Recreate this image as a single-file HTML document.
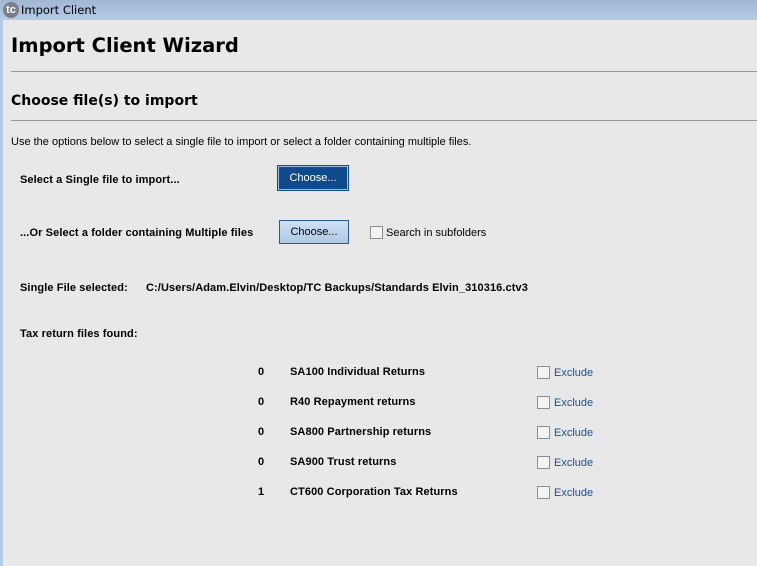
<!DOCTYPE html>
<html><head><style>
body{margin:0;width:757px;height:566px;overflow:hidden;background:#e8e8e8;font-family:"Liberation Sans",Arial,sans-serif;position:relative}
.a{position:absolute;white-space:nowrap}
.b{font-weight:bold;font-size:11px;color:#000;letter-spacing:0.1px}
.t{font-size:11px;color:#000}
.cb{position:absolute;width:11px;height:11px;border:1px solid #8f8f8f;background:#f4f4f4}
.ex{font-size:11px;color:#1a4f94}
.btn{position:absolute;width:70px;height:24px;box-sizing:border-box;font-size:11px;text-align:center;line-height:22px}
</style></head><body>
<div class="a" style="left:0;top:0;width:757px;height:20px;background:linear-gradient(#a0b6d2,#b4cbe6)"></div>
<div class="a" style="left:0;top:20px;width:3px;height:546px;background:#b4cbe6"></div>
<div class="a" style="left:3px;top:2px;width:16px;height:16px;border-radius:50%;background:#7a7f86;color:#fff;font-weight:bold;font-size:11px;line-height:16px;text-align:center">tc</div>
<div class="a" style="left:21px;top:3px;font-size:11.5px;font-family:'DejaVu Sans',sans-serif;color:#000">Import Client</div>
<div class="a" style="left:11px;top:34px;font-size:19.5px;font-weight:bold;font-family:'DejaVu Sans',sans-serif">Import Client Wizard</div>
<div class="a" style="left:11px;top:71px;width:746px;height:1px;background:#9a9a9a"></div>
<div class="a" style="left:11px;top:93px;font-size:14px;font-weight:bold;font-family:'DejaVu Sans',sans-serif">Choose file(s) to import</div>
<div class="a" style="left:11px;top:120px;width:746px;height:1px;background:#9a9a9a"></div>
<div class="a t" style="left:11px;top:136px">Use the options below to select a single file to import or select a folder containing multiple files.</div>
<div class="a b" style="left:20px;top:174px">Select a Single file to import...</div>
<div class="btn" style="left:278px;top:166px;background:#0e4a8c;border:1px solid #9fc0e6;color:#fff;outline:1px solid #0e4a8c">Choose...</div>
<div class="a b" style="left:20px;top:227px">...Or Select a folder containing Multiple files</div>
<div class="btn" style="left:279px;top:220px;background:linear-gradient(#cde0f3,#aec9e6);border:1px solid #2a5a96;color:#000">Choose...</div>
<div class="cb" style="left:370px;top:226px"></div>
<div class="a t" style="left:386px;top:227px">Search in subfolders</div>
<div class="a b" style="left:20px;top:282px">Single File selected:</div>
<div class="a b" style="left:146px;top:282px">C:/Users/Adam.Elvin/Desktop/TC Backups/Standards Elvin_310316.ctv3</div>
<div class="a b" style="left:20px;top:328px">Tax return files found:</div>
<div class="a b" style="left:258px;top:366px">0</div><div class="a b" style="left:290px;top:366px">SA100 Individual Returns</div><div class="cb" style="left:537px;top:366px"></div><div class="a ex" style="left:554px;top:367px">Exclude</div>
<div class="a b" style="left:258px;top:396px">0</div><div class="a b" style="left:290px;top:396px">R40 Repayment returns</div><div class="cb" style="left:537px;top:396px"></div><div class="a ex" style="left:554px;top:397px">Exclude</div>
<div class="a b" style="left:258px;top:426px">0</div><div class="a b" style="left:290px;top:426px">SA800 Partnership returns</div><div class="cb" style="left:537px;top:426px"></div><div class="a ex" style="left:554px;top:427px">Exclude</div>
<div class="a b" style="left:258px;top:456px">0</div><div class="a b" style="left:290px;top:456px">SA900 Trust returns</div><div class="cb" style="left:537px;top:456px"></div><div class="a ex" style="left:554px;top:457px">Exclude</div>
<div class="a b" style="left:258px;top:486px">1</div><div class="a b" style="left:290px;top:486px">CT600 Corporation Tax Returns</div><div class="cb" style="left:537px;top:486px"></div><div class="a ex" style="left:554px;top:487px">Exclude</div>
</body></html>
